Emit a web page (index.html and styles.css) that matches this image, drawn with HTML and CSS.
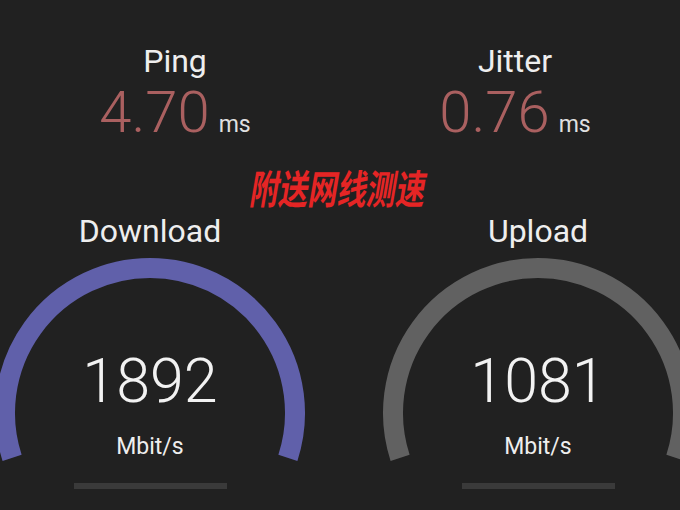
FILE: index.html
```html
<!DOCTYPE html>
<html lang="zh">
<head>
<meta charset="utf-8">
<title>Speedtest</title>
<link rel="stylesheet" href="styles.css">
</head>
<body>
<main class="page">
  <section class="latency">
    <div class="lat-col">
      <div class="lat-label">Ping</div>
      <div class="lat-value"><span class="lat-num">4.70</span><span class="lat-unit">ms</span></div>
    </div>
    <div class="lat-col">
      <div class="lat-label">Jitter</div>
      <div class="lat-value"><span class="lat-num">0.76</span><span class="lat-unit">ms</span></div>
    </div>
  </section>

  <div class="promo"><span class="promo-text">附送网线测速</span></div>

  <section class="gauges">
    <div class="gauge">
      <div class="gauge-label">Download</div>
      <div class="gauge-body">
        <svg class="gauge-svg" width="300" height="220" viewBox="0 0 300 220">
          <path class="arc arc-dl" d="M 12.1 207.8 A 145 145 0 1 1 287.9 207.8"/>
        </svg>
        <div class="gauge-text">
          <div class="gauge-num">1892</div>
          <div class="gauge-unit">Mbit/s</div>
        </div>
      </div>
      <div class="gauge-bar"></div>
    </div>
    <div class="gauge">
      <div class="gauge-label">Upload</div>
      <div class="gauge-body">
        <svg class="gauge-svg" width="300" height="220" viewBox="0 0 300 220">
          <path class="arc arc-ul" d="M 12.1 207.8 A 145 145 0 1 1 287.9 207.8"/>
        </svg>
        <div class="gauge-text">
          <div class="gauge-num">1081</div>
          <div class="gauge-unit">Mbit/s</div>
        </div>
      </div>
      <div class="gauge-bar"></div>
    </div>
  </section>
</main>
</body>
</html>
```
FILE: styles.css
```css
html, body {
  margin: 0;
  padding: 0;
  background: #212121;
  overflow: hidden;
}
body {
  width: 680px;
  height: 510px;
  font-family: Roboto, "Liberation Sans", sans-serif;
  color: #eeeeee;
}
.page {
  display: flex;
  flex-direction: column;
  padding-top: 42px;
}
.latency {
  display: flex;
  gap: 40px;
  padding-left: 25px;
}
.lat-col {
  width: 300px;
  display: flex;
  flex-direction: column;
  align-items: center;
}
.lat-label {
  font-size: 32px;
  line-height: 38px;
  height: 40px;
  color: #eeeeee;
}
.lat-value {
  display: flex;
  align-items: baseline;
  height: 60px;
  white-space: nowrap;
}
.lat-num {
  font-size: 58px;
  line-height: 60px;
  font-weight: 300;
  color: #aa6060;
}
.lat-unit {
  font-size: 23px;
  line-height: 28px;
  margin-left: 9px;
  color: #e0e0e0;
}
.promo {
  display: flex;
  justify-content: center;
  margin-top: 25px;
  height: 40px;
  line-height: 40px;
}
.promo-text {
  display: inline-block;
  font-family: "Noto Sans CJK SC", sans-serif;
  font-size: 40px;
  font-weight: 700;
  color: #e52525;
  transform: scaleX(0.73) skewX(-13deg);
  margin-left: -3px;
}
.gauges {
  display: flex;
  gap: 88px;
  margin-top: 5px;
}
.gauge {
  width: 300px;
  flex: none;
  display: flex;
  flex-direction: column;
  align-items: center;
}
.gauge-label {
  font-size: 32px;
  line-height: 38px;
  color: #eeeeee;
}
.gauge-body {
  display: grid;
  width: 300px;
}
.gauge-svg {
  grid-area: 1 / 1;
  overflow: visible;
  display: block;
}
.arc {
  fill: none;
  stroke-width: 20;
  stroke-linecap: butt;
}
.arc-dl { stroke: #6060aa; }
.arc-ul { stroke: #616161; }
.gauge-text {
  grid-area: 1 / 1;
  display: flex;
  flex-direction: column;
  align-items: center;
  padding-top: 99px;
}
.gauge-num {
  font-size: 61px;
  font-weight: 300;
  line-height: 64px;
  color: #f2f2f2;
}
.gauge-unit {
  font-size: 23px;
  line-height: 28px;
  margin-top: 20px;
  color: #eeeeee;
}
.gauge-bar {
  width: 153px;
  height: 6px;
  margin-top: 13px;
  background: #3a3a3a;
}
```
